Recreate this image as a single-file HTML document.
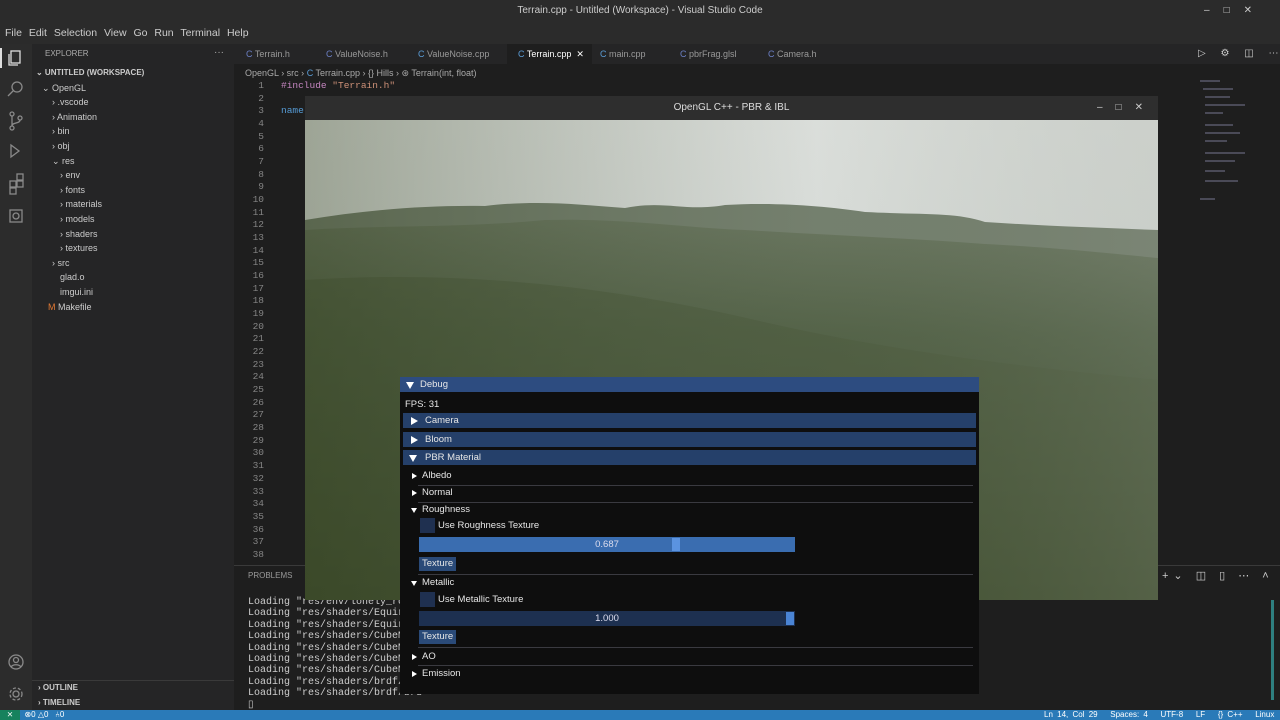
<!DOCTYPE html>
<html><head><meta charset="utf-8"><style>
*{margin:0;padding:0;box-sizing:border-box}
body{width:1280px;height:720px;overflow:hidden;background:#1e1e1e;font-family:"Liberation Sans",sans-serif;font-size:10px;color:#ccc;position:relative}
.a{position:absolute;white-space:nowrap}
.mono{font-family:"Liberation Mono",monospace}
.tree div{height:14.6px;line-height:14.6px;font-size:9px;color:#ccc;white-space:nowrap}
.ln div{height:12.68px;line-height:12.68px;font-size:9.5px;color:#858585;text-align:right}
.tab{position:absolute;top:44px;height:20px;line-height:20px;font-size:9px;color:#999;padding-left:10px;white-space:nowrap}
.term div{height:11.4px;line-height:11.4px;font-size:10px;color:#ccc;white-space:nowrap}
.dbg{background:#0e0e0e;color:#e6e6e6;font-size:9.5px}
.hdr{position:absolute;left:3px;right:3px;height:15px;background:#25406a;line-height:15px;padding-left:22px}
.tri{position:absolute;left:8px;top:4px;width:0;height:0;border-left:7px solid #fff;border-top:4px solid transparent;border-bottom:4px solid transparent}
.trd{position:absolute;left:6px;top:5px;width:0;height:0;border-top:7px solid #fff;border-left:4px solid transparent;border-right:4px solid transparent}
.node{position:absolute;left:3px;right:3px;height:17px;line-height:17px;padding-left:19px}
.st{position:absolute;left:9px;top:6px;border-left:5px solid #fff;border-top:3px solid transparent;border-bottom:3px solid transparent}
.sd{position:absolute;left:8px;top:7px;border-top:5px solid #fff;border-left:3px solid transparent;border-right:3px solid transparent}
.sep{position:absolute;left:18px;right:6px;height:1px;background:#3a3a40}
.btn{position:absolute;height:14px;line-height:14px;background:#2a4a78;padding:0 3px;font-size:9.5px}
</style></head><body>
<div class="a" style="left:0;top:0;width:1280px;height:22px;background:#2b2b2b;text-align:center;line-height:22px;font-size:10px;color:#ccc">Terrain.cpp - Untitled (Workspace) - Visual Studio Code</div>
<div class="a" style="right:14px;top:0;line-height:22px;font-size:10px;color:#ccc;letter-spacing:14px">–□✕</div>
<div class="a" style="left:0;top:22px;width:1280px;height:22px;background:#2b2b2b;line-height:22px;font-size:10.5px;color:#ccc;padding-left:5px;word-spacing:4px">File Edit Selection View Go Run Terminal Help</div>
<div class="a" style="left:0;top:44px;width:32px;height:666px;background:#2c2c2c"></div>
<div class="a" style="left:0;top:48px;width:2px;height:20px;background:#ddd"></div>
<svg class="a" style="left:6px;top:48px" width="20" height="190" fill="none" stroke="#8a8a8a" stroke-width="1.3">
<rect x="5" y="3" width="9" height="12" stroke="#ddd"/><path d="M3 6v11h9" stroke="#ddd"/>
<circle cx="11" cy="39" r="5"/><path d="M7 43l-5 5"/>
<circle cx="6" cy="66" r="2"/><circle cx="14" cy="70" r="2"/><circle cx="6" cy="80" r="2"/><path d="M6 68v10M14 72c0 4-8 2-8 6"/>
<path d="M5 97l8 6-8 6z"/><rect x="4" y="133" width="6" height="6"/><rect x="11" y="133" width="6" height="6"/><rect x="4" y="140" width="6" height="6"/><rect x="11" y="126" width="6" height="6"/>
<rect x="4" y="162" width="12" height="12"/><circle cx="10" cy="168" r="3"/>
</svg>
<svg class="a" style="left:5px;top:652px" width="22" height="52" fill="none" stroke="#8a8a8a" stroke-width="1.3"><circle cx="11" cy="10" r="7"/><circle cx="11" cy="8" r="2.5"/><path d="M6 15c2-3 8-3 10 0"/><circle cx="11" cy="42" r="3"/><circle cx="11" cy="42" r="6" stroke-dasharray="3 2"/></svg>
<div class="a" style="left:32px;top:44px;width:202px;height:666px;background:#252526"></div>
<div class="a" style="left:45px;top:49px;font-size:8px;color:#aaa">EXPLORER</div>
<div class="a" style="left:214px;top:47px;font-size:10px;color:#aaa">···</div>
<div class="a tree" style="left:36px;top:66px">
<div style="font-weight:bold;font-size:8px">⌄ UNTITLED (WORKSPACE)</div>
<div style="padding-left:6px">⌄ OpenGL</div>
<div style="padding-left:16px">› .vscode</div>
<div style="padding-left:16px">› Animation</div>
<div style="padding-left:16px">› bin</div>
<div style="padding-left:16px">› obj</div>
<div style="padding-left:16px">⌄ res</div>
<div style="padding-left:24px">› env</div>
<div style="padding-left:24px">› fonts</div>
<div style="padding-left:24px">› materials</div>
<div style="padding-left:24px">› models</div>
<div style="padding-left:24px">› shaders</div>
<div style="padding-left:24px">› textures</div>
<div style="padding-left:16px">› src</div>
<div style="padding-left:24px">glad.o</div>
<div style="padding-left:24px">imgui.ini</div>
<div style="padding-left:12px"><span style="color:#e37933">M</span> Makefile</div>
</div>
<div class="a" style="left:32px;top:680px;width:202px;height:1px;background:#3a3a3a"></div>
<div class="a" style="left:38px;top:683px;font-size:8px;font-weight:bold;color:#ccc">› OUTLINE</div>
<div class="a" style="left:38px;top:698px;font-size:8px;font-weight:bold;color:#ccc">› TIMELINE</div>
<div class="a" style="left:234px;top:44px;width:1046px;height:20px;background:#252526"></div>
<div class="a" style="left:507px;top:44px;width:85px;height:20px;background:#1e1e1e"></div>
<div class="tab" style="left:236px"><span style="color:#6b7fc4">C</span> Terrain.h</div>
<div class="tab" style="left:316px"><span style="color:#6b7fc4">C</span> ValueNoise.h</div>
<div class="tab" style="left:408px"><span style="color:#5a9bd4">C</span> ValueNoise.cpp</div>
<div class="tab" style="left:508px;color:#fff"><span style="color:#5a9bd4">C</span> Terrain.cpp &nbsp;✕</div>
<div class="tab" style="left:590px"><span style="color:#5a9bd4">C</span> main.cpp</div>
<div class="tab" style="left:670px"><span style="color:#6b7fc4">C</span> pbrFrag.glsl</div>
<div class="tab" style="left:758px"><span style="color:#6b7fc4">C</span> Camera.h</div>
<div class="a" style="left:1198px;top:48px;font-size:10px;color:#ccc;letter-spacing:6px">▷ ⚙ ◫ ⋯</div>
<div class="a" style="left:245px;top:68px;font-size:9px;color:#aaa">OpenGL › src › <span style="color:#5a9bd4">C</span> Terrain.cpp › {} Hills › ⊛ Terrain(int, float)</div>
<div class="a ln mono" style="left:240px;top:80px;width:24px">
<div>1</div><div>2</div><div>3</div><div>4</div><div>5</div><div>6</div><div>7</div><div>8</div><div>9</div><div>10</div><div>11</div><div>12</div><div>13</div><div>14</div><div>15</div><div>16</div><div>17</div><div>18</div><div>19</div><div>20</div><div>21</div><div>22</div><div>23</div><div>24</div><div>25</div><div>26</div><div>27</div><div>28</div><div>29</div><div>30</div><div>31</div><div>32</div><div>33</div><div>34</div><div>35</div><div>36</div><div>37</div><div>38</div></div>
<div class="a mono" style="left:281px;top:80px;line-height:12.68px;font-size:9.5px;color:#ce9178"><span style="color:#c586c0">#include</span> "Terrain.h"</div>
<div class="a mono" style="left:281px;top:105px;line-height:12.68px;font-size:9.5px;color:#569cd6">name</div>
<svg class="a" style="left:1195px;top:78px" width="80" height="130"><g fill="#556" opacity=".8">
<rect x="5" y="2" width="20" height="2"/><rect x="8" y="10" width="30" height="2"/><rect x="10" y="18" width="25" height="2"/><rect x="10" y="26" width="40" height="2"/><rect x="10" y="34" width="18" height="2"/><rect x="10" y="46" width="28" height="2"/><rect x="10" y="54" width="35" height="2"/><rect x="10" y="62" width="22" height="2"/><rect x="10" y="74" width="40" height="2"/><rect x="10" y="82" width="30" height="2"/><rect x="10" y="92" width="20" height="2"/><rect x="10" y="102" width="33" height="2"/><rect x="5" y="120" width="15" height="2"/></g></svg>
<div class="a" style="left:234px;top:565px;width:1046px;height:145px;background:#1e1e1e;border-top:1px solid #3a3a3a"></div>
<div class="a" style="left:248px;top:571px;font-size:8px;color:#999">PROBLEMS</div>
<div class="a" style="left:1162px;top:569px;font-size:11px;color:#ccc;letter-spacing:5px">+⌄ ◫ ▯ ⋯ ˄ ✕</div>
<div class="a term mono" style="left:248px;top:597px">
<div>Loading "res/env/lonely_road</div><div>Loading "res/shaders/Equirect</div><div>Loading "res/shaders/Equirect</div><div>Loading "res/shaders/CubeMapC</div><div>Loading "res/shaders/CubeMapC</div><div>Loading "res/shaders/CubeMapF</div><div>Loading "res/shaders/CubeMapF</div><div>Loading "res/shaders/brdf/brd</div><div>Loading "res/shaders/brdf/brd</div><div>▯</div></div>
<div class="a" style="left:1271px;top:600px;width:3px;height:100px;background:#2e7f80"></div>
<div class="a" style="left:0;top:710px;width:1280px;height:10px;background:#2a7ab8;font-size:8px;line-height:10px;color:#fff;overflow:hidden"><span style="display:inline-block;width:20px;background:#16825d;text-align:center">⨯</span> &nbsp;⊗0 △0 &nbsp; ⑃0<span style="position:absolute;left:1044px;top:0;white-space:nowrap;word-spacing:2px">Ln 14, Col 29 &nbsp; Spaces: 4 &nbsp; UTF-8 &nbsp; LF &nbsp; {} C++ &nbsp; Linux &nbsp; ♫</span></div>
<div class="a" style="left:305px;top:96px;width:853px;height:24px;background:#2e2e2e;text-align:center;line-height:24px;font-size:10px;color:#ddd">OpenGL C++ - PBR &amp; IBL</div>
<div class="a" style="left:1097px;top:96px;line-height:24px;font-size:10px;color:#ccc;letter-spacing:13px">–□✕</div>
<svg class="a" style="left:305px;top:120px" width="853" height="480">
<defs>
<linearGradient id="sky" x1="0" y1="0" x2="0" y2="1"><stop offset="0" stop-color="#eef0ef"/><stop offset="1" stop-color="#e3e8e7"/></linearGradient>
<linearGradient id="g1" x1="0" y1="0" x2="0" y2="1"><stop offset="0" stop-color="#6e7a64"/><stop offset=".3" stop-color="#56654a"/><stop offset="1" stop-color="#3a4828"/></linearGradient>
<linearGradient id="g2" x1="0" y1="0" x2="1" y2="0"><stop offset="0" stop-color="#2e3c1a" stop-opacity=".7"/><stop offset=".6" stop-color="#4a5840" stop-opacity=".2"/><stop offset="1" stop-color="#7c8576" stop-opacity=".5"/></linearGradient>
</defs>
<rect width="853" height="480" fill="url(#sky)"/>
<path d="M0 100 C60 90 120 85 180 86 C230 80 270 84 320 88 C360 80 380 92 420 85 C470 82 520 86 560 92 C620 95 650 92 680 102 C740 106 800 108 853 110 L853 480 L0 480Z" fill="#7a8574"/>
<path d="M0 110 C80 105 160 108 240 100 C320 98 380 108 440 110 C520 115 600 118 680 124 C760 128 820 135 853 138 L853 480 L0 480Z" fill="url(#g1)"/>
<path d="M0 160 C150 150 300 165 450 200 C600 235 750 250 853 260 L853 480 L0 480Z" fill="#4d5b3d" opacity=".5"/>
<rect width="853" height="480" fill="url(#g2)" opacity=".6"/>
</svg>
<div class="a dbg" style="left:400px;top:377px;width:579px;height:317px">
<div style="position:absolute;left:0;top:0;right:0;height:15px;background:#2d4c80;line-height:15px;padding-left:20px">Debug<div class="trd"></div></div>
<div style="position:absolute;left:5px;top:22px">FPS: 31</div>
<div class="hdr" style="top:36px">Camera<div class="tri"></div></div>
<div class="hdr" style="top:55px">Bloom<div class="tri"></div></div>
<div class="hdr" style="top:73px">PBR Material<div class="trd"></div></div>
<div class="node" style="top:90px">Albedo<div class="st"></div></div>
<div class="sep" style="top:108px"></div>
<div class="node" style="top:107px">Normal<div class="st"></div></div>
<div class="sep" style="top:125px"></div>
<div class="node" style="top:124px">Roughness<div class="sd"></div></div>
<div style="position:absolute;left:20px;top:141px;width:15px;height:15px;background:#1f3050"></div>
<div style="position:absolute;left:38px;top:141px;line-height:15px">Use Roughness Texture</div>
<div style="position:absolute;left:19px;top:160px;width:376px;height:15px;background:#3a6db0;text-align:center;line-height:15px;color:#dde">0.687</div>
<div style="position:absolute;left:272px;top:161px;width:8px;height:13px;background:#5b93e0"></div>
<div class="btn" style="left:19px;top:180px">Texture</div>
<div class="sep" style="top:197px"></div>
<div class="node" style="top:197px">Metallic<div class="sd"></div></div>
<div style="position:absolute;left:20px;top:215px;width:15px;height:15px;background:#1f3050"></div>
<div style="position:absolute;left:38px;top:215px;line-height:15px">Use Metallic Texture</div>
<div style="position:absolute;left:19px;top:234px;width:376px;height:15px;background:#1d3050;text-align:center;line-height:15px;color:#dde">1.000</div>
<div style="position:absolute;left:386px;top:235px;width:8px;height:13px;background:#4a84d4"></div>
<div class="btn" style="left:19px;top:253px">Texture</div>
<div class="sep" style="top:270px"></div>
<div class="node" style="top:271px">AO<div class="st"></div></div>
<div class="sep" style="top:288px"></div>
<div class="node" style="top:288px">Emission<div class="st"></div></div>
</div>
</body></html>
